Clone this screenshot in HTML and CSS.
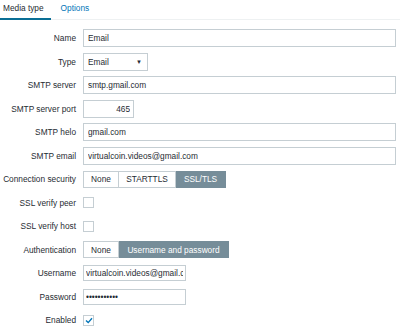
FILE: index.html
```html
<!DOCTYPE html>
<html lang="en">
<head>
    <meta charset="UTF-8">
    <title>Media type</title>
    <link rel="stylesheet" href="styles.css">
</head>
<body>
    <div class="tabs">
        <span class="tab active">Media type</span>
        <span class="tab">Options</span>
    </div>
    <div class="form-list">
        <label>Name</label>
        <div class="field"><input class="text wide" type="text" value="Email"></div>

        <label>Type</label>
        <div class="field">
            <div class="select">Email<span class="arrow">&#9660;</span></div>
        </div>

        <label>SMTP server</label>
        <div class="field"><input class="text wide" type="text" value="smtp.gmail.com"></div>

        <label>SMTP server port</label>
        <div class="field"><input class="text port" type="text" value="465"></div>

        <label>SMTP helo</label>
        <div class="field"><input class="text wide" type="text" value="gmail.com"></div>

        <label>SMTP email</label>
        <div class="field"><input class="text wide" type="text" value="virtualcoin.videos@gmail.com"></div>

        <label>Connection security</label>
        <div class="field">
            <div class="segmented">
                <span class="seg seg-none">None</span>
                <span class="seg seg-starttls">STARTTLS</span>
                <span class="seg seg-ssl selected">SSL/TLS</span>
            </div>
        </div>

        <label>SSL verify peer</label>
        <div class="field"><span class="checkbox"></span></div>

        <label>SSL verify host</label>
        <div class="field"><span class="checkbox"></span></div>

        <label>Authentication</label>
        <div class="field">
            <div class="segmented">
                <span class="seg seg-none">None</span>
                <span class="seg seg-userpass selected">Username and password</span>
            </div>
        </div>

        <label>Username</label>
        <div class="field"><input class="text short" type="text" value="virtualcoin.videos@gmail.com"></div>

        <label>Password</label>
        <div class="field"><input class="text short" type="text" value="&#8226;&#8226;&#8226;&#8226;&#8226;&#8226;&#8226;&#8226;&#8226;&#8226;&#8226;"></div>

        <label>Enabled</label>
        <div class="field">
            <span class="checkbox checked">
                <svg width="8" height="7" viewBox="0 0 8 7"><path d="M1 3.5 L3.2 5.6 L7 1.2" fill="none" stroke="#0275b8" stroke-width="1.4"/></svg>
            </span>
        </div>
    </div>
</body>
</html>
```

FILE: styles.css
```css
body {
    margin: 0;
    font-family: 'Liberation Sans', Arial, sans-serif;
    font-size: 8.3px;
    color: #1f2c33;
    background-color: #ffffff;
}
.tabs {
    display: flex;
    height: 19px;
    border-bottom: 1px solid #eef1f2;
}
.tab {
    padding: 3px 4px 0 3px;
    margin-right: 10px;
    color: #0275b8;
}
.tab.active {
    color: #1f2c33;
    border-bottom: 2px solid #0a6e95;
    padding-right: 7px;
    margin-right: 7px;
    height: 15px;
}
.form-list {
    display: grid;
    grid-template-columns: 76px 1fr;
    grid-auto-rows: 18px;
    column-gap: 7px;
    row-gap: 5.5px;
    padding: 9px 4px 0 0;
    align-items: center;
}
.form-list label {
    text-align: right;
}
.field {
    display: flex;
    align-items: center;
}
.text {
    box-sizing: border-box;
    height: 18px;
    border: 1px solid #c5ced3;
    padding: 0 4px;
    font-family: 'Liberation Sans', Arial, sans-serif;
    font-size: 8.3px;
    color: #1f2c33;
    background-color: #ffffff;
    outline: none;
}
.text.wide {
    width: 313px;
}
.text.port {
    width: 51px;
    text-align: right;
    padding-right: 3px;
}
.text.short {
    width: 103px;
    height: 16px;
    padding: 0 2px;
}
.select {
    box-sizing: border-box;
    width: 65px;
    height: 18px;
    border: 1px solid #c5ced3;
    padding: 0 4px;
    display: flex;
    align-items: center;
    justify-content: space-between;
}
.select .arrow {
    font-size: 6px;
    margin-right: 1px;
}
.segmented {
    display: flex;
    height: 17px;
}
.seg {
    box-sizing: border-box;
    height: 17px;
    border: 1px solid #c5ced3;
    border-left: none;
    display: flex;
    align-items: center;
    justify-content: center;
}
.seg:first-child {
    border-left: 1px solid #c5ced3;
}
.seg-none {
    width: 36px;
}
.seg-starttls {
    width: 57px;
}
.seg-ssl {
    width: 50px;
}
.seg-userpass {
    width: 110px;
}
.seg.selected {
    background-color: #768d99;
    border-color: #768d99;
    color: #ffffff;
}
.checkbox {
    box-sizing: border-box;
    width: 11px;
    height: 11px;
    border: 1px solid #c5ced3;
    display: flex;
    align-items: center;
    justify-content: center;
}
```
